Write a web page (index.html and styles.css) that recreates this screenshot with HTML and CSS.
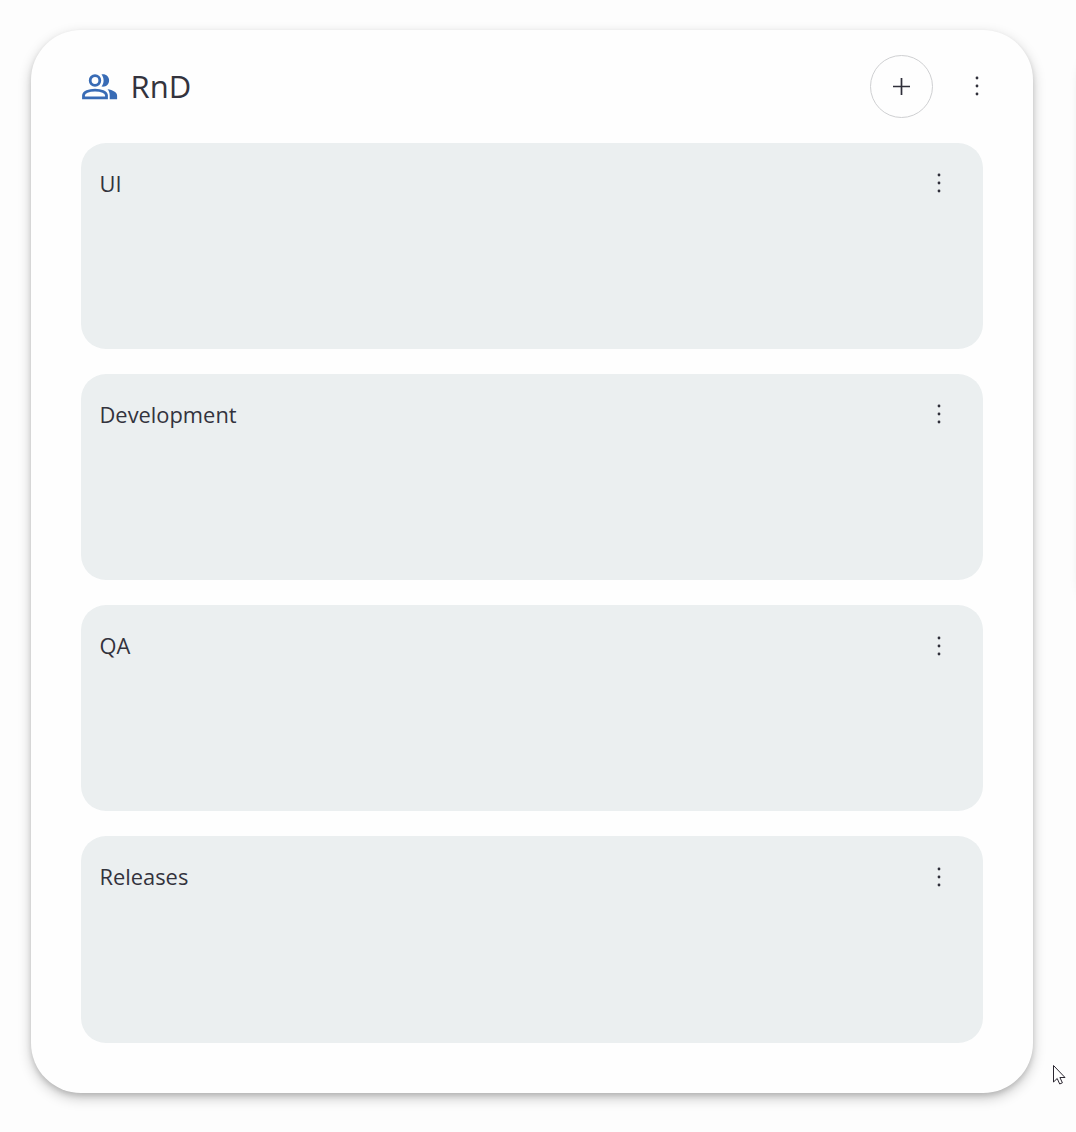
FILE: index.html
```html
<!DOCTYPE html>
<html lang="en">
<head>
  <meta charset="UTF-8">
  <meta name="viewport" content="width=device-width, initial-scale=1.0">
  <title>RnD</title>
  <link rel="stylesheet" href="styles.css">
</head>
<body>
  <main class="board">
    <section class="card">
      <header class="card-header">
        <svg class="group-icon" viewBox="0 0 36 26" aria-hidden="true">
          <circle cx="13" cy="6.5" r="4.8"/>
          <path d="M1.5 23.9v-2.4c0-3.5 5.5-5.4 11.5-5.4s11.5 1.9 11.5 5.4v2.4z"/>
          <path class="fill" d="M19.5.5c4.2-.8 7.600 2 7.600 6s-3.400 6.900-7.600 6.100c1.300-1.600 2.100-3.700 2.100-6.100S20.800 2.100 19.500.5z"/>
          <path class="fill" d="M25.500 15.300c5.300.8 9.600 2.900 9.600 6.300v3.700h-7.400v-3.900c0-2.500-.7-4.500-2.200-6.100z"/>
        </svg>
        <h1 class="card-title">RnD</h1>
        <button class="add-btn" type="button" aria-label="Add">
          <svg viewBox="0 0 17 17"><path d="M8.5 0v17M0 8.5h17"/></svg>
        </button>
        <button class="menu-btn" type="button" aria-label="Menu">
          <svg viewBox="0 0 4 20"><circle cx="2" cy="2" r="1.4"/><circle cx="2" cy="10" r="1.4"/><circle cx="2" cy="18" r="1.4"/></svg>
        </button>
      </header>
      <div class="list">
        <article class="tile">
          <h2 class="tile-title">UI</h2>
          <button class="menu-btn" type="button" aria-label="Menu">
            <svg viewBox="0 0 4 20"><circle cx="2" cy="2" r="1.4"/><circle cx="2" cy="10" r="1.4"/><circle cx="2" cy="18" r="1.4"/></svg>
          </button>
        </article>
        <article class="tile">
          <h2 class="tile-title">Development</h2>
          <button class="menu-btn" type="button" aria-label="Menu">
            <svg viewBox="0 0 4 20"><circle cx="2" cy="2" r="1.4"/><circle cx="2" cy="10" r="1.4"/><circle cx="2" cy="18" r="1.4"/></svg>
          </button>
        </article>
        <article class="tile">
          <h2 class="tile-title">QA</h2>
          <button class="menu-btn" type="button" aria-label="Menu">
            <svg viewBox="0 0 4 20"><circle cx="2" cy="2" r="1.4"/><circle cx="2" cy="10" r="1.4"/><circle cx="2" cy="18" r="1.4"/></svg>
          </button>
        </article>
        <article class="tile">
          <h2 class="tile-title">Releases</h2>
          <button class="menu-btn" type="button" aria-label="Menu">
            <svg viewBox="0 0 4 20"><circle cx="2" cy="2" r="1.4"/><circle cx="2" cy="10" r="1.4"/><circle cx="2" cy="18" r="1.4"/></svg>
          </button>
        </article>
      </div>
    </section>
    <section class="card next-card"></section>
  </main>
  <svg class="cursor" viewBox="0 0 13 20" aria-hidden="true">
    <path d="M.5.5v16.5l3.7-3.5 2.5 5.5 2.7-1.2-2.5-5.300h5.100z"/>
  </svg>
</body>
</html>
```

FILE: styles.css
```css
* {margin:0; padding:0; box-sizing:border-box;}
body{
  background: #fdfdfd;
  color: #33333d;
  font-family: "Open Sans", "Noto Sans", sans-serif;
  font-weight: 400;
}
button{
  border: 0;
  background: none;
  color: inherit;
}
.board{
  display: flex;
  align-items: flex-start;
  gap: 50px;
  height: 1132px;
  padding: 30px 0 0 31px;
  overflow: hidden;
}
.card{
  flex: none;
  width: 1002px;
  height: 1063px;
  padding: 25px 50px 50px;
  border-radius: 50px;
  background: #fefefe;
  box-shadow: 0 5px 13px rgba(0,0,0,0.22), 0 3px 5px rgba(0,0,0,0.12);
}
.next-card{height: 590px;}

/* header */
.card-header{
  display: flex;
  align-items: center;
  height: 63px;
}
.group-icon{
  width: 36px;
  height: 26px;
  margin-left: 1px;
  fill: none;
  stroke: #386bb5;
  stroke-width: 2.8;
}
.group-icon .fill{fill: #386bb5; stroke: none;}
.card-title{
  margin-left: 12.5px;
  padding-bottom: 2px;
  font-size: 31px;
  font-weight: 400;
  line-height: 42px;
}
.add-btn{
  display: flex;
  align-items: center;
  justify-content: center;
  width: 63px;
  height: 63px;
  margin-left: auto;
  border: 1px solid #cfd0d2;
  border-radius: 50%;
}
.add-btn svg{
  width: 17px;
  height: 17px;
  margin-bottom: 1px;
  stroke: #2f2f3a;
  stroke-width: 1.7;
}
.menu-btn{
  display: flex;
  align-items: center;
  justify-content: center;
  width: 38px;
  height: 38px;
}
.menu-btn svg{
  width: 4px;
  height: 20px;
  fill: #2f2f3a;
}
.card-header .menu-btn{
  width: 37px;
  margin: 0 -12px 1px 25px;
}

/* list */
.list{
  display: flex;
  flex-direction: column;
  gap: 25px;
  margin-top: 24.7px;
}
.tile{
  display: flex;
  align-items: flex-start;
  justify-content: space-between;
  height: 206.25px;
  padding: 21.4px 25px 0 18.5px;
  border-radius: 25px;
  background: #ebeff0;
}
.tile-title{
  margin-top: 0.53px;
  font-size: 21.875px;
  font-weight: 400;
  line-height: 37.6px;
}

.cursor{
  position: absolute;
  left: 1053px;
  top: 1065px;
  width: 13px;
  height: 20px;
  fill: #fff;
  stroke: #2a2630;
}
```
